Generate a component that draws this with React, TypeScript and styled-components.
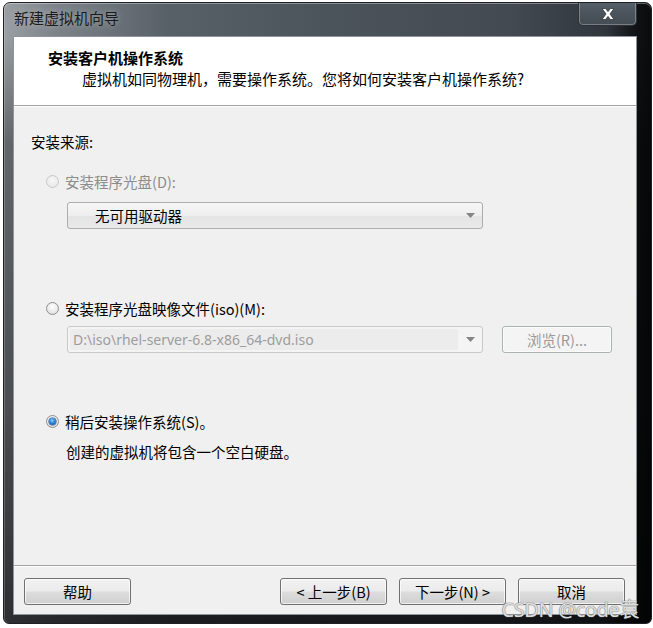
import React from "react";
import styled, { createGlobalStyle } from "styled-components";

const GlobalStyle = createGlobalStyle`
  html, body {
    margin: 0;
    padding: 0;
    background: #ffffff;
  }
  body {
    font-family: "Noto Sans CJK SC", "Noto Sans", sans-serif;
    color: #000;
  }
`;

const Window = styled.div`
  position: relative;
  box-sizing: border-box;
  width: 649px;
  height: 622px;
  margin: 2px 0 0 3px;
  padding: 0 14px 8px 9px;
  display: flex;
  flex-direction: column;
  border: 1px solid #1e2226;
  border-radius: 7px 7px 6px 6px;
  background:
    linear-gradient(180deg, rgba(0, 0, 0, 0) 0px, rgba(0, 0, 0, 0) 34px, rgba(0, 0, 0, 0.35) 140px, rgba(0, 0, 0, 0.5) 400px, rgba(0, 0, 0, 0.7) 100%),
    linear-gradient(90deg, #9a9fa4 0%, #7d8389 8%, #596168 25%, #4b535b 50%, #434a52 78%, #30363c 93%, #101214 97.5%, #0a0b0c 100%);
  box-shadow: inset 0 1px 0 rgba(255, 255, 255, 0.35), inset 1px 0 0 rgba(255, 255, 255, 0.2);
  overflow: hidden;
`;

const TitleBar = styled.div`
  height: 33px;
  display: flex;
  align-items: flex-start;
`;

const TitleText = styled.div`
  padding: 5px 0 0 1px;
  font-size: 15px;
  line-height: 20px;
  color: #1b1b1b;
  text-shadow: 0 0 6px rgba(210, 215, 220, 0.6);
`;

const CloseButton = styled.div`
  margin-left: auto;
  margin-top: -1px;
  box-sizing: border-box;
  width: 59px;
  height: 24px;
  display: flex;
  align-items: center;
  justify-content: center;
  border: 1px solid #2c3237;
  border-top: none;
  border-radius: 0 0 5px 5px;
  background: linear-gradient(180deg, #566068 0%, #4b545c 50%, #444c54 100%);
  box-shadow: inset 0 0 0 1px rgba(255, 255, 255, 0.28);
`;

const Client = styled.div`
  flex: 1;
  display: flex;
  flex-direction: column;
  border: 1px solid #8e949a;
  background: #f0f0f0;
`;

const Header = styled.div`
  height: 69px;
  box-sizing: border-box;
  padding: 10px 0 0 34px;
  background: #ffffff;
  border-bottom: 1px solid #a0a0a0;
`;

const HeaderTitle = styled.div`
  font-size: 15px;
  line-height: 21px;
  font-weight: 700;
`;

const HeaderSub = styled.div`
  font-size: 15px;
  line-height: 21px;
  padding-left: 34px;
`;

const Body = styled.div`
  flex: 1;
  display: flex;
  flex-direction: column;
  padding: 26px 0 0 17px;
  box-shadow: inset 0 1px 0 #ffffff;
`;

const Label = styled.div<{ $top?: number; $indent?: number; $muted?: boolean }>`
  margin-top: ${(p) => p.$top ?? 0}px;
  padding-left: ${(p) => p.$indent ?? 0}px;
  font-size: 14.5px;
  line-height: 20px;
  color: ${(p) => (p.$muted ? "#8c8c8c" : "#000")};
`;

const RadioRow = styled.label<{ $top: number; $disabled?: boolean }>`
  margin-top: ${(p) => p.$top}px;
  padding-left: 15px;
  display: flex;
  align-items: center;
  gap: 6px;
  height: 20px;
  font-size: 14.5px;
  color: ${(p) => (p.$disabled ? "#8c8c8c" : "#000")};
`;

const RadioCircle = styled.span<{ $checked?: boolean; $disabled?: boolean }>`
  position: relative;
  box-sizing: border-box;
  width: 13px;
  height: 13px;
  border-radius: 50%;
  border: 1px solid ${(p) => (p.$disabled ? "#c8c8c8" : "#8e8f8f")};
  background: ${(p) =>
    p.$disabled
      ? "radial-gradient(circle at 50% 40%, #f7f7f7, #e4e4e4)"
      : "radial-gradient(circle at 50% 35%, #ffffff, #d9d9d9)"};

  &::after {
    content: "";
    display: ${(p) => (p.$checked ? "block" : "none")};
    position: absolute;
    left: 2px;
    top: 2px;
    width: 7px;
    height: 7px;
    border-radius: 50%;
    background: radial-gradient(circle at 45% 35%, #8fd0ff 0%, #2b85d6 45%, #0d4f9c 100%);
    box-shadow: 0 0 0 0.5px #17457a;
  }
`;

const FieldRow = styled.div<{ $top: number }>`
  margin-top: ${(p) => p.$top}px;
  padding-left: 36px;
  display: flex;
  gap: 19px;
`;

const Select = styled.div<{ $disabled?: boolean }>`
  box-sizing: border-box;
  width: 416px;
  height: 27px;
  display: flex;
  align-items: center;
  border: 1px solid ${(p) => (p.$disabled ? "#c9c9c9" : "#acacac")};
  border-radius: 3px;
  background: ${(p) =>
    p.$disabled ? "#f4f4f4" : "linear-gradient(180deg, #f6f6f6 0%, #eeeeee 50%, #e4e4e4 51%, #e9e9e9 100%)"};
  font-size: 14.5px;
`;

const SelectText = styled.div<{ $field?: boolean }>`
  flex: 1;
  align-self: stretch;
  margin: ${(p) => (p.$field ? "2px 0 2px 2px" : "0")};
  padding-left: ${(p) => (p.$field ? "3px" : "27px")};
  display: flex;
  align-items: center;
  background: ${(p) => (p.$field ? "#ececec" : "transparent")};
  color: ${(p) => (p.$field ? "#9d9d9d" : "#000")};
  font-family: ${(p) => (p.$field ? '"Noto Sans", "Noto Sans CJK SC", sans-serif' : '"Noto Sans CJK SC", sans-serif')};
  font-size: ${(p) => (p.$field ? "14px" : "14.5px")};
`;

const Arrow = styled.div`
  width: 24px;
  display: flex;
  justify-content: center;
`;

const Button = styled.div<{ $disabled?: boolean; $width?: number }>`
  box-sizing: border-box;
  width: ${(p) => p.$width ?? 107}px;
  height: 27px;
  display: flex;
  align-items: center;
  justify-content: center;
  border: 1px solid ${(p) => (p.$disabled ? "#adb2b5" : "#707070")};
  border-radius: 3px;
  background: ${(p) =>
    p.$disabled
      ? "#f4f4f4"
      : "linear-gradient(180deg, #f2f2f2 0%, #ebebeb 48%, #dddddd 52%, #cfcfcf 100%)"};
  box-shadow: inset 0 0 0 1px rgba(255, 255, 255, 0.7);
  font-size: 14.5px;
  color: ${(p) => (p.$disabled ? "#9a9a9a" : "#000")};
  white-space: pre;
`;

const Footer = styled.div`
  height: 49px;
  box-sizing: border-box;
  padding: 12px 11px 0 10px;
  display: flex;
  gap: 12px;
  border-top: 1px solid #a0a0a0;
  box-shadow: inset 0 1px 0 #ffffff;
`;

const Spacer = styled.div`
  flex: 1;
`;

const Watermark = styled.div`
  position: absolute;
  right: 12px;
  bottom: 2px;
  font-family: "Noto Sans", "Noto Sans CJK SC", sans-serif;
  font-size: 20px;
  line-height: 22px;
  color: rgba(238, 238, 238, 0.9);
  text-shadow: 0 0 1px #6a6a6a, 0 0 1px #6a6a6a;
  letter-spacing: -0.4px;
`;

const DropArrow = () => (
  <svg width="9" height="5" viewBox="0 0 9 5">
    <path d="M0 0 H9 L4.5 5 Z" fill="#858585" />
  </svg>
);

const CloseGlyph = () => (
  <svg width="14" height="12" viewBox="0 0 14 12">
    <path
      d="M1 0.5 H4.6 L7 3.6 L9.4 0.5 H13 L9 6 L13 11.5 H9.4 L7 8.4 L4.6 11.5 H1 L5 6 Z"
      fill="#ffffff"
      stroke="#30363c"
      strokeWidth="0.8"
    />
  </svg>
);

export default function App() {
  return (
    <>
      <GlobalStyle />
      <Window>
        <TitleBar>
          <TitleText>新建虚拟机向导</TitleText>
          <CloseButton>
            <CloseGlyph />
          </CloseButton>
        </TitleBar>
        <Client>
          <Header>
            <HeaderTitle>安装客户机操作系统</HeaderTitle>
            <HeaderSub>虚拟机如同物理机，需要操作系统。您将如何安装客户机操作系统?</HeaderSub>
          </Header>
          <Body>
            <Label>安装来源:</Label>

            <RadioRow $top={19} $disabled>
              <RadioCircle $disabled />
              安装程序光盘(D):
            </RadioRow>
            <FieldRow $top={11}>
              <Select>
                <SelectText>无可用驱动器</SelectText>
                <Arrow>
                  <DropArrow />
                </Arrow>
              </Select>
            </FieldRow>

            <RadioRow $top={69}>
              <RadioCircle />
              安装程序光盘映像文件(iso)(M):
            </RadioRow>
            <FieldRow $top={8}>
              <Select $disabled>
                <SelectText $field>D:\iso\rhel-server-6.8-x86_64-dvd.iso</SelectText>
                <Arrow>
                  <DropArrow />
                </Arrow>
              </Select>
              <Button $disabled $width={110}>
                浏览(R)...
              </Button>
            </FieldRow>

            <RadioRow $top={58}>
              <RadioCircle $checked />
              稍后安装操作系统(S)。
            </RadioRow>
            <Label $top={11} $indent={35}>
              创建的虚拟机将包含一个空白硬盘。
            </Label>
          </Body>
          <Footer>
            <Button>帮助</Button>
            <Spacer />
            <Button>{"< 上一步(B)"}</Button>
            <Button>{"下一步(N) >"}</Button>
            <Button>取消</Button>
          </Footer>
        </Client>
        <Watermark>CSDN @code袁</Watermark>
      </Window>
    </>
  );
}
